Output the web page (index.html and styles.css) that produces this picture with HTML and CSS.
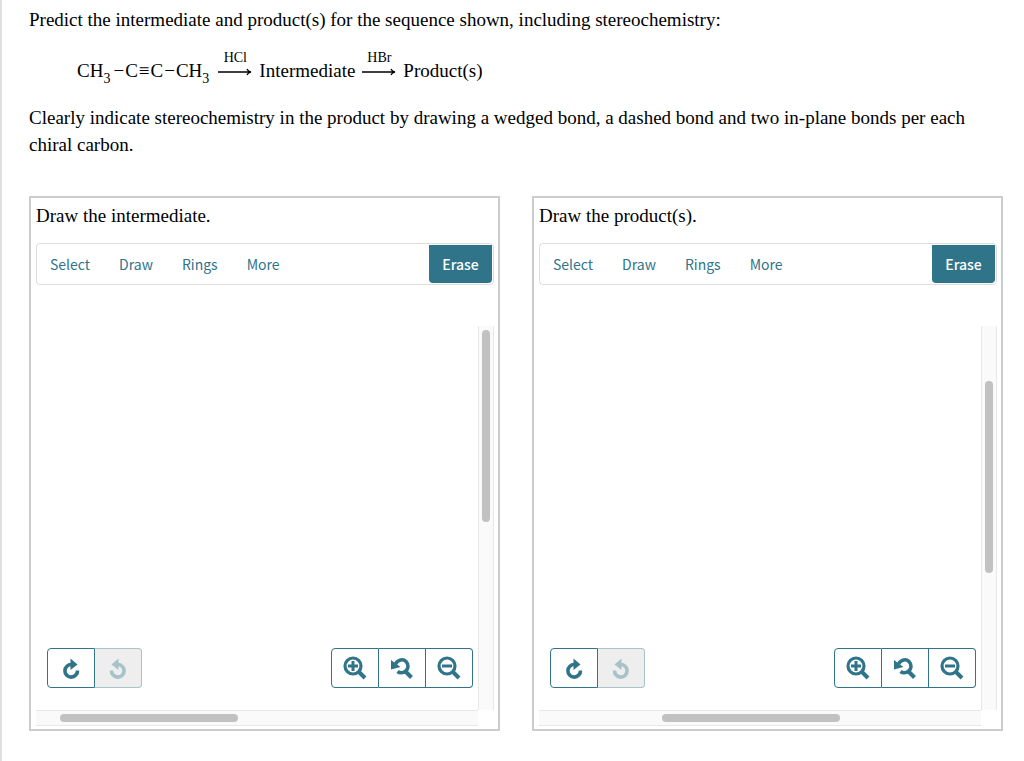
FILE: index.html
```html
<!DOCTYPE html>
<html lang="en">
<head>
<meta charset="utf-8">
<meta name="viewport" content="width=device-width, initial-scale=1">
<title>Reaction sequence</title>
<link rel="stylesheet" href="styles.css">
</head>
<body>
<svg class="symbols" aria-hidden="true">
  <symbol id="arrow" viewBox="0 0 34 8"><path d="M0 4H33M29 1Q30 3.500 33 4Q30 4.500 29 7" fill="none" stroke="currentColor" stroke-width="1.300"/></symbol>
  <symbol id="redo" viewBox="0 0 18 22"><path d="M9.500 7.500A6.300 6.300 0 1 0 15.500 13.500" fill="none" stroke="currentColor" stroke-width="3.600"/><path d="M8.500 1.500L15.500 7.500L8.500 13Z" fill="currentColor"/></symbol>
  <symbol id="undo" viewBox="0 0 18 22"><path d="M8.500 7.500A6.300 6.300 0 1 1 2.500 13.500" fill="none" stroke="currentColor" stroke-width="3.600"/><path d="M9.500 1.500L2.500 7.500L9.500 13Z" fill="currentColor"/></symbol>
  <symbol id="zoom-in" viewBox="0 0 24 24"><circle cx="10" cy="10" r="8" fill="none" stroke="currentColor" stroke-width="3.200"/><path d="M15.500 15.500L22 22" stroke="currentColor" stroke-width="4"/><path d="M10 5V15M5 10H15" stroke="currentColor" stroke-width="3"/></symbol>
  <symbol id="zoom-out" viewBox="0 0 24 24"><circle cx="10" cy="10" r="8" fill="none" stroke="currentColor" stroke-width="3.200"/><path d="M15.500 15.500L22 22" stroke="currentColor" stroke-width="4"/><path d="M5 10H15" stroke="currentColor" stroke-width="3"/></symbol>
  <symbol id="zoom-reset" viewBox="0 0 24 24"><path d="M5.500 8C8 3.500 13 2.500 16 5.500C19 8.500 18.500 13 15.500 15.300C13 17.200 9.500 17 7.500 15.500" fill="none" stroke="currentColor" stroke-width="3.600"/><path d="M1 4V13.500L10.500 11Z" fill="currentColor"/><path d="M15.500 15.500L21.500 21.500" stroke="currentColor" stroke-width="4"/></symbol>
</svg>
<main class="page">
  <p class="prompt">Predict the intermediate and product(s) for the sequence shown, including stereochemistry:</p>
  <div class="equation">
    <span>CH<sub>3</sub><span class="bond">−</span>C<span class="bond">≡</span>C<span class="bond">−</span>CH<sub>3</sub></span>
    <span class="step"><span class="reagent">HCl</span><svg class="arrow"><use href="#arrow"/></svg></span>
    <span>Intermediate</span>
    <span class="step"><span class="reagent">HBr</span><svg class="arrow"><use href="#arrow"/></svg></span>
    <span>Product(s)</span>
  </div>
  <p class="prompt">Clearly indicate stereochemistry in the product by drawing a wedged bond, a dashed bond and two in-plane bonds per each chiral carbon.</p>
  <div class="panels">
    <section class="panel">
      <h2 class="title">Draw the intermediate.</h2>
      <div class="toolbar">
        <button class="menu">Select</button><button class="menu">Draw</button><button class="menu">Rings</button><button class="menu">More</button>
        <button class="erase">Erase</button>
      </div>
      <div class="editor">
        <div class="canvas">
          <div class="group">
            <button class="tool" aria-label="Redo"><svg class="turn"><use href="#redo"/></svg></button>
            <button class="tool" aria-label="Undo" disabled><svg class="turn"><use href="#undo"/></svg></button>
          </div>
          <div class="group">
            <button class="tool" aria-label="Zoom in"><svg class="lens"><use href="#zoom-in"/></svg></button>
            <button class="tool" aria-label="Reset zoom"><svg class="lens"><use href="#zoom-reset"/></svg></button>
            <button class="tool" aria-label="Zoom out"><svg class="lens"><use href="#zoom-out"/></svg></button>
          </div>
        </div>
        <div class="track-y"><div class="thumb-y thumb-top"></div></div>
        <div class="track-x"><div class="thumb-x thumb-left"></div></div>
      </div>
    </section>
    <section class="panel">
      <h2 class="title">Draw the product(s).</h2>
      <div class="toolbar">
        <button class="menu">Select</button><button class="menu">Draw</button><button class="menu">Rings</button><button class="menu">More</button>
        <button class="erase">Erase</button>
      </div>
      <div class="editor">
        <div class="canvas">
          <div class="group">
            <button class="tool" aria-label="Redo"><svg class="turn"><use href="#redo"/></svg></button>
            <button class="tool" aria-label="Undo" disabled><svg class="turn"><use href="#undo"/></svg></button>
          </div>
          <div class="group">
            <button class="tool" aria-label="Zoom in"><svg class="lens"><use href="#zoom-in"/></svg></button>
            <button class="tool" aria-label="Reset zoom"><svg class="lens"><use href="#zoom-reset"/></svg></button>
            <button class="tool" aria-label="Zoom out"><svg class="lens"><use href="#zoom-out"/></svg></button>
          </div>
        </div>
        <div class="track-y"><div class="thumb-y thumb-middle"></div></div>
        <div class="track-x"><div class="thumb-x thumb-center"></div></div>
      </div>
    </section>
  </div>
</main>
</body>
</html>
```
FILE: styles.css
```css
* { box-sizing: border-box; }
body { margin: 0; background: #fff; color: #000; font: 19px/27px "Liberation Serif", "Times New Roman", serif; }
.symbols { display: none; }
.page { min-height: 100vh; padding: 6px 21px 30px 27px; border-left: 2px solid #e0e0e0; }
.prompt { margin: 0; }
.equation { display: flex; align-items: center; gap: 7px; margin: 27px 0 22px 48px; line-height: 22px; white-space: nowrap; height: 22px; }
sub { font-size: 14px; line-height: 0; vertical-align: -6px; margin-right: 2px; }
.bond { margin: 0 1px; }
.step { display: flex; flex-direction: column; align-items: center; height: 46px; }
.reagent { font-size: 14px; line-height: 20px; }
.arrow { display: block; width: 34px; height: 8px; }
.panels { display: grid; grid-template-columns: 1fr 1fr; gap: 32px; margin-top: 38px; }
.panel { border: 2px solid #ccc; padding: 4px 4px 3px 5px; }
.title { margin: 0; font-size: 19px; font-weight: 400; line-height: 27px; }
.toolbar { display: flex; align-items: center; height: 42px; margin-top: 14px; padding: 1px; border: 1px solid #ddd; border-radius: 4px; }
button { font: 14px/20px "Noto Sans CJK SC", "Noto Sans", sans-serif; color: #30748a; background: #fff; border: 0; padding: 0; }
.menu { padding: 0 17px 0 12px; }
.erase { align-self: stretch; width: 63px; margin-left: auto; color: #fff; font-weight: 500; background: #30748a; border-radius: 0 0 4px 4px; }
.editor { display: grid; grid-template: 384px 16px / 1fr 16px; margin-top: 41px; }
.canvas { display: flex; align-items: flex-end; justify-content: space-between; padding: 0 5px 22px 11px; }
.group { display: flex; height: 40px; }
.tool { display: grid; place-items: center; width: 48px; border: 1px solid #30748a; }
.tool:first-child { border-radius: 4px 0 0 4px; }
.tool:last-child { border-radius: 0 4px 4px 0; }
.tool + .tool { width: 47px; border-left: 0; }
.tool:disabled { color: #a8c2ca; background: #eee; border-color: #a8c2ca; }
.turn { width: 18px; height: 22px; }
.lens { width: 24px; height: 24px; }
.track-y { border: solid #e8e8e8; border-width: 0 1px; background: #fafafa; padding: 4px 3px; }
.track-x { border: solid #e8e8e8; border-width: 1px 0; background: #fafafa; padding: 3px 0; }
.thumb-y { width: 8px; height: 192px; border-radius: 4px; background: #c1c1c1; }
.thumb-x { width: 178px; height: 8px; border-radius: 4px; background: #c1c1c1; }
.thumb-middle { margin-top: 51px; }
.thumb-left { margin-left: 24px; }
.thumb-center { margin-left: 123px; }
```
